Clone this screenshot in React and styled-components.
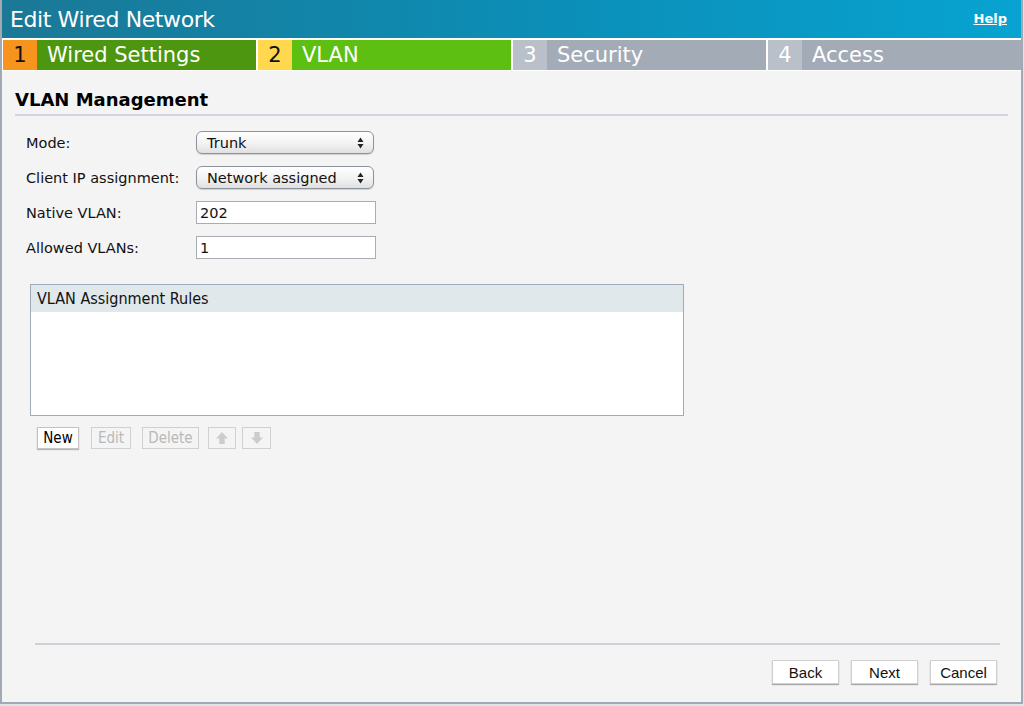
import React from "react";
import styled, { createGlobalStyle } from "styled-components";

const GlobalStyle = createGlobalStyle`
  html, body {
    margin: 0;
    padding: 0;
    background: #dfe3e6;
  }
  body {
    font-family: "DejaVu Sans", Verdana, sans-serif;
  }
`;

const Dialog = styled.div`
  width: 1019px;
  height: 702px;
  background: #f4f4f4;
  border: 2px solid #a3a9b3;
  border-top: none;
  display: flex;
  flex-direction: column;
  overflow: hidden;
`;

const TitleBar = styled.div`
  height: 38px;
  flex-shrink: 0;
  display: flex;
  align-items: center;
  justify-content: space-between;
  padding: 0 14px 0 8px;
  background: linear-gradient(to right, #1b7896, #0b8fb8 55%, #08a3d1);
  color: #fff;
`;

const Title = styled.div`
  font-size: 22px;
  letter-spacing: -0.4px;
`;

const HelpLink = styled.a`
  font-size: 13px;
  font-weight: bold;
  color: #fff;
  text-decoration: underline;
  margin-top: -2px;
`;

const Steps = styled.div`
  display: grid;
  grid-template-columns: repeat(4, 1fr);
  gap: 2px;
  background: #fff;
  padding: 2px 0 1px 1px;
  flex-shrink: 0;
`;

const palette = {
  done: { num: "#f7941e", numText: "#111", label: "#4d9610" },
  active: { num: "#ffd84d", numText: "#111", label: "#5cbf12" },
  todo: { num: "#b9c0ca", numText: "#fff", label: "#a3abb6" },
};

const Step = styled.div`
  display: flex;
  height: 30px;
`;

const StepNum = styled.div`
  width: 34px;
  display: flex;
  align-items: center;
  justify-content: center;
  font-size: 21px;
  background: ${(p) => palette[p.$state].num};
  color: ${(p) => palette[p.$state].numText};
`;

const StepLabel = styled.div`
  flex: 1;
  display: flex;
  align-items: center;
  padding-left: 10px;
  font-size: 21px;
  color: #fff;
  background: ${(p) => palette[p.$state].label};
`;

const Body = styled.div`
  flex: 1;
  display: flex;
  flex-direction: column;
  padding: 18px 13px 0 13px;
`;

const Heading = styled.h2`
  margin: 0;
  font-size: 18px;
  font-weight: bold;
  color: #000;
  padding-bottom: 4px;
  border-bottom: 2px solid #d2d5dc;
`;

const Form = styled.div`
  display: grid;
  grid-template-columns: 170px auto;
  grid-auto-rows: 23px;
  row-gap: 12px;
  align-items: center;
  justify-content: start;
  padding: 15px 0 0 11px;
`;

const Label = styled.label`
  font-size: 14.5px;
  color: #111;
`;

const SelectBox = styled.div`
  width: 178px;
  height: 23px;
  box-sizing: border-box;
  border: 1px solid #8d939b;
  border-radius: 6px;
  background: linear-gradient(#ffffff, #f2f2f2 55%, #e0e0e0);
  box-shadow: 0 1px 1px rgba(0, 0, 0, 0.15);
  display: flex;
  align-items: center;
  justify-content: space-between;
  padding: 0 9px 0 10px;
  font-size: 14.5px;
  color: #111;
`;

const TextInput = styled.div`
  width: 180px;
  height: 23px;
  box-sizing: border-box;
  border: 1px solid #a8adb4;
  background: #fff;
  display: flex;
  align-items: center;
  padding-left: 3px;
  font-size: 14.5px;
  color: #111;
`;

const RulesTable = styled.div`
  width: 654px;
  height: 132px;
  box-sizing: border-box;
  margin: 25px 0 0 15px;
  border: 1px solid #9eabb8;
  background: #fff;
`;

const RulesHeader = styled.div`
  height: 27px;
  background: #e1e8eb;
  display: flex;
  align-items: center;
  padding-left: 6px;
  font-family: "DejaVu Sans Condensed", Tahoma, sans-serif;
  font-size: 16px;
  color: #111;
`;

const RuleButtons = styled.div`
  display: flex;
  align-items: center;
  margin: 11px 0 0 22px;
`;

const SmallButton = styled.button`
  height: 22px;
  box-sizing: border-box;
  padding: 0 5px;
  margin-right: ${(p) => p.$gap || 0}px;
  border: 1px solid ${(p) => (p.disabled ? "#d0d0d0" : "#c3c3c3")};
  background: ${(p) => (p.disabled ? "#f4f4f4" : "#fff")};
  box-shadow: ${(p) => (p.disabled ? "none" : "0 1px 1px rgba(0,0,0,0.25)")};
  font-family: "DejaVu Sans Condensed", Tahoma, sans-serif;
  font-size: 15px;
  color: ${(p) => (p.disabled ? "#b9b9b9" : "#000")};
  display: flex;
  align-items: center;
  justify-content: center;
  width: ${(p) => p.$w}px;
`;

const Spacer = styled.div`
  flex: 1;
`;

const Footer = styled.div`
  border-top: 2px solid #cdd0d8;
  margin: 0 8px 0 20px;
  padding: 15px 3px 18px 0;
  display: flex;
  justify-content: flex-end;
  gap: 12px;
`;

const FooterButton = styled.button`
  width: 67px;
  height: 24px;
  box-sizing: border-box;
  border: 1px solid #d0d0d0;
  background: #fff;
  box-shadow: 0 1px 1px rgba(0, 0, 0, 0.3);
  font-family: "Liberation Sans", Arial, sans-serif;
  font-size: 15px;
  color: #111;
`;

const Arrows = () => (
  <svg width="7" height="12" viewBox="0 0 7 12">
    <path d="M3.5 0.5 L6.5 5 L0.5 5 Z" fill="#222" />
    <path d="M3.5 11.5 L6.5 7 L0.5 7 Z" fill="#222" />
  </svg>
);

const ArrowIcon = ({ down }) => (
  <svg width="14" height="14" viewBox="0 0 13 13">
    <path
      d={
        down
          ? "M4 1 H9 V6 H12 L6.5 12 L1 6 H4 Z"
          : "M4 12 H9 V7 H12 L6.5 1 L1 7 H4 Z"
      }
      fill="#cccccc"
    />
  </svg>
);

const steps = [
  { n: 1, label: "Wired Settings", state: "done" },
  { n: 2, label: "VLAN", state: "active" },
  { n: 3, label: "Security", state: "todo" },
  { n: 4, label: "Access", state: "todo" },
];

export default function App() {
  return (
    <>
      <GlobalStyle />
      <Dialog>
        <TitleBar>
          <Title>Edit Wired Network</Title>
          <HelpLink href="#">Help</HelpLink>
        </TitleBar>
        <Steps>
          {steps.map((s) => (
            <Step key={s.n}>
              <StepNum $state={s.state}>{s.n}</StepNum>
              <StepLabel $state={s.state}>{s.label}</StepLabel>
            </Step>
          ))}
        </Steps>
        <Body>
          <Heading>VLAN Management</Heading>
          <Form>
            <Label>Mode:</Label>
            <SelectBox>
              Trunk <Arrows />
            </SelectBox>
            <Label>Client IP assignment:</Label>
            <SelectBox>
              Network assigned <Arrows />
            </SelectBox>
            <Label>Native VLAN:</Label>
            <TextInput>202</TextInput>
            <Label>Allowed VLANs:</Label>
            <TextInput>1</TextInput>
          </Form>
          <RulesTable>
            <RulesHeader>VLAN Assignment Rules</RulesHeader>
          </RulesTable>
          <RuleButtons>
            <SmallButton $w={42} $gap={12}>New</SmallButton>
            <SmallButton disabled $w={40} $gap={11}>Edit</SmallButton>
            <SmallButton disabled $w={57} $gap={9}>Delete</SmallButton>
            <SmallButton disabled $w={28} $gap={6}>
              <ArrowIcon />
            </SmallButton>
            <SmallButton disabled $w={29}>
              <ArrowIcon down />
            </SmallButton>
          </RuleButtons>
          <Spacer />
          <Footer>
            <FooterButton>Back</FooterButton>
            <FooterButton>Next</FooterButton>
            <FooterButton>Cancel</FooterButton>
          </Footer>
        </Body>
      </Dialog>
    </>
  );
}
